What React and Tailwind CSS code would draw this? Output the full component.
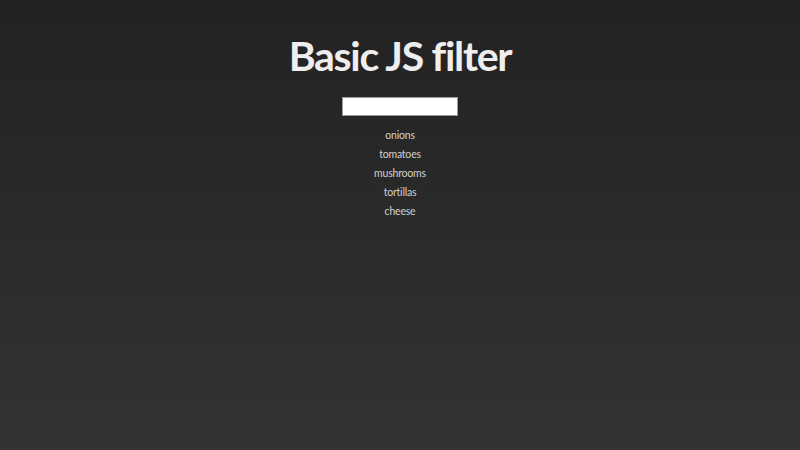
import React, { useState } from "react";

const items = ["onions", "tomatoes", "mushrooms", "tortillas", "cheese"];

const App = () => {
  const [query, setQuery] = useState("");
  const shown = items.filter((item) => item.includes(query.toLowerCase()));

  return (
    <div
      className="min-h-[450px] w-full bg-gradient-to-b from-[#222222] to-[#333333] flex flex-col items-center pt-[28px]"
      style={{ fontFamily: "Lato, 'Open Sans', sans-serif" }}
    >
      <h1 className="text-[41px] leading-[56px] font-bold text-[#eeeeee] tracking-[-1.3px]">
        Basic JS filter
      </h1>
      <input
        type="text"
        value={query}
        onChange={(e) => setQuery(e.target.value)}
        className="mt-[13px] w-[116px] h-[19px] bg-white border border-[#999] outline-none text-[11px] px-1"
      />
      <ul className="mt-[10px] flex flex-col items-center">
        {shown.map((item) => (
          <li key={item} className="text-[10.5px] leading-[19px] text-[#d0d0d0] tracking-[-0.2px]">
            {item}
          </li>
        ))}
      </ul>
    </div>
  );
};

export default App;
